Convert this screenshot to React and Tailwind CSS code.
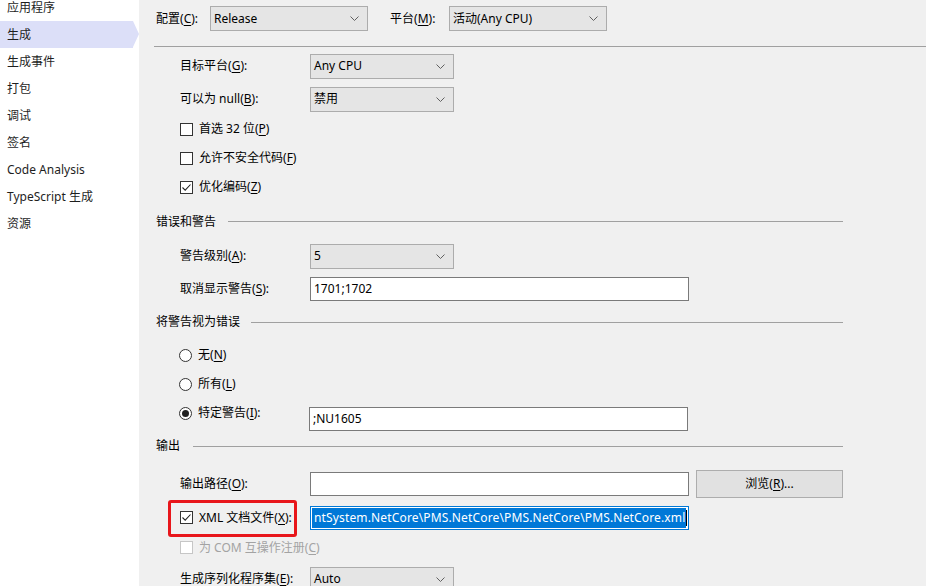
import React from "react";

const navItems = [
  "应用程序",
  "生成",
  "生成事件",
  "打包",
  "调试",
  "签名",
  "Code Analysis",
  "TypeScript 生成",
  "资源",
];

// label with an underlined access key, e.g. 配置(C):
const Acc = ({ t, k, a = "" }) => (
  <span className="whitespace-nowrap">
    {t}(<span className="underline underline-offset-2">{k}</span>){a}
  </span>
);

const Chevron = () => (
  <svg width="9" height="5" viewBox="0 0 9 5" className="shrink-0">
    <path d="M0.5 0.5 L4.5 4.5 L8.5 0.5" fill="none" stroke="#606060" strokeWidth="1" />
  </svg>
);

const Select = ({ value, w }) => (
  <div
    className={`flex h-[25px] items-center justify-between border border-[#acacac] bg-[#e5e5e5] pl-[3px] pr-[8px] ${w}`}
  >
    <span>{value}</span>
    <Chevron />
  </div>
);

const TextBox = ({ value, className = "" }) => (
  <div
    className={`flex h-[24px] w-[379px] items-center border border-[#7a7a7a] bg-white pl-[3px] ${className}`}
  >
    {value}
  </div>
);

const CheckBox = ({ checked, disabled }) => (
  <span
    className={`flex h-[13px] w-[13px] shrink-0 items-center justify-center border bg-white ${
      disabled ? "border-[#c6c6c6] bg-[#f7f7f7]" : "border-[#333333]"
    }`}
  >
    {checked && (
      <svg width="11" height="11" viewBox="0 0 11 11">
        <path d="M1.5 5.5 L4.2 8.2 L9.5 2.5" fill="none" stroke="#222" strokeWidth="1.1" />
      </svg>
    )}
  </span>
);

const Radio = ({ checked }) => (
  <span className="flex h-[13px] w-[13px] shrink-0 items-center justify-center rounded-full border border-[#333333] bg-white">
    {checked && <span className="h-[7px] w-[7px] rounded-full bg-[#222]" />}
  </span>
);

const Header = ({ h, gap, children }) => (
  <div className={`mr-[83px] flex items-center pl-[17px] ${h}`}>
    <span className="whitespace-nowrap">{children}</span>
    <span className={`h-px flex-1 bg-[#a0a0a0] ${gap}`} />
  </div>
);

const Row = ({ h, children }) => (
  <div className={`flex items-center pl-[41px] ${h}`}>{children}</div>
);

const Label = ({ children }) => <div className="w-[130px] shrink-0">{children}</div>;

const CheckRow = ({ h, checked, children }) => (
  <Row h={h}>
    <CheckBox checked={checked} />
    <span className="ml-[6px]">{children}</span>
  </Row>
);

const RadioRow = ({ h, checked, children }) => (
  <div className={`flex items-center pl-[40px] ${h}`}>
    <Radio checked={checked} />
    <span className="ml-[6px]">{children}</span>
  </div>
);

export default function App() {
  return (
    <div className="flex h-[586px] w-[926px] overflow-hidden bg-[#f0f0f0] font-['Noto_Sans','Noto_Sans_CJK_SC',sans-serif] text-[12px] leading-none text-black">
      {/* left navigation */}
      <aside className="w-[139px] shrink-0 bg-white">
        <ul className="mt-[-6px]">
          {navItems.map((item) => (
            <li
              key={item}
              className={`relative flex h-[27px] items-center pl-[7px] text-[#1e1e1e] ${
                item === "生成" ? "mr-[6px] bg-[#dcdff8]" : ""
              }`}
            >
              {item}
              {item === "生成" && (
                <span className="absolute right-[-6px] top-0 h-0 w-0 border-y-[13.5px] border-l-[6px] border-y-transparent border-l-[#dcdff8]" />
              )}
            </li>
          ))}
        </ul>
      </aside>

      {/* settings panel */}
      <main className="flex-1">
        <div className="flex h-[36px] items-center pl-[17px] pt-[1px]">
          <div className="w-[54px]">
            <Acc t="配置" k="C" a=":" />
          </div>
          <Select value="Release" w="w-[158px]" />
          <div className="ml-[22px] w-[59px]">
            <Acc t="平台" k="M" a=":" />
          </div>
          <Select value="活动(Any CPU)" w="w-[158px]" />
        </div>
        <div className="ml-[15px] mt-[10px] h-px bg-[#a0a0a0]" />

        <div className="pt-[1px]">
          <Row h="h-[36px]">
            <Label>
              <Acc t="目标平台" k="G" a=":" />
            </Label>
            <Select value="Any CPU" w="w-[144px]" />
          </Row>
          <Row h="h-[30px]">
            <Label>
              <Acc t="可以为 null" k="B" a=":" />
            </Label>
            <Select value="禁用" w="w-[144px]" />
          </Row>
          <CheckRow h="h-[30px]">
            <Acc t="首选 32 位" k="P" />
          </CheckRow>
          <CheckRow h="h-[28px]">
            <Acc t="允许不安全代码" k="F" />
          </CheckRow>
          <CheckRow h="h-[30px]" checked>
            <Acc t="优化编码" k="Z" />
          </CheckRow>

          <Header h="h-[38px] pt-[1px]" gap="ml-[12px]">
            错误和警告
          </Header>
          <Row h="h-[32px]">
            <Label>
              <Acc t="警告级别" k="A" a=":" />
            </Label>
            <Select value="5" w="w-[144px]" />
          </Row>
          <Row h="h-[34px]">
            <Label>
              <Acc t="取消显示警告" k="S" a=":" />
            </Label>
            <TextBox value="1701;1702" />
          </Row>

          <Header h="h-[32px]" gap="ml-[11px]">
            将警告视为错误
          </Header>
          <RadioRow h="h-[34px]">
            <Acc t="无" k="N" />
          </RadioRow>
          <RadioRow h="h-[24px]">
            <Acc t="所有" k="L" />
          </RadioRow>
          <div className="flex h-[34px] items-center pl-[40px]">
            <Radio checked />
            <span className="ml-[6px] w-[111px]">
              <Acc t="特定警告" k="I" a=":" />
            </span>
            <TextBox value=";NU1605" className="mt-[11px]" />
          </div>

          <Header h="h-[32px]" gap="ml-[13px]">
            输出
          </Header>
          <Row h="h-[43px]">
            <Label>
              <Acc t="输出路径" k="O" a=":" />
            </Label>
            <TextBox value="" />
            <button className="ml-[7px] flex h-[28px] w-[147px] items-center justify-center border border-[#adadad] bg-[#e1e1e1]">
              <Acc t="浏览" k="R" a="..." />
            </button>
          </Row>
          <Row h="h-[25px]">
            <div className="relative flex w-[130px] shrink-0 items-center">
              <CheckBox checked />
              <span className="ml-[6px]">
                <Acc t="XML 文档文件" k="X" a=":" />
              </span>
              <span className="pointer-events-none absolute left-[-12px] top-[-11px] h-[37px] w-[129px] rounded-[3px] border-[3px] border-[#e8161b]" />
            </div>
            <div className="flex h-[24px] w-[379px] items-center overflow-hidden border border-[#0078d7] bg-white px-[1px]">
              <span className="flex h-[20px] items-center whitespace-nowrap bg-[#0078d7] pl-[2px] pr-[1px] tracking-[0.15px] text-white">
                ntSystem.NetCore\PMS.NetCore\PMS.NetCore\PMS.NetCore.xml
              </span>
              <span className="h-[16px] w-px bg-black" />
            </div>
          </Row>
          <div className="flex h-[35px] items-center pl-[41px] text-[#a3a3a3]">
            <CheckBox disabled />
            <span className="ml-[6px]">
              <Acc t="为 COM 互操作注册" k="C" />
            </span>
          </div>
          <Row h="h-[28px]">
            <Label>
              <Acc t="生成序列化程序集" k="E" a=":" />
            </Label>
            <Select value="Auto" w="w-[144px]" />
          </Row>
        </div>
      </main>
    </div>
  );
}
